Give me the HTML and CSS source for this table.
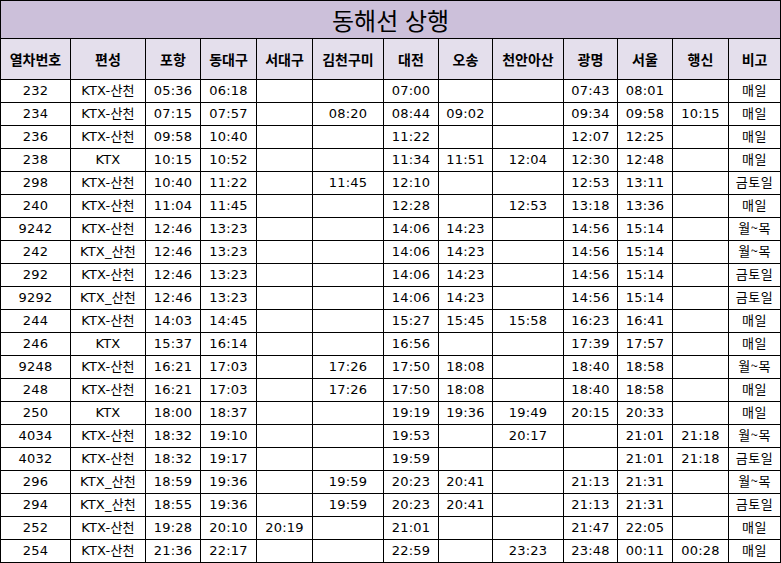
FILE: index.html
```html
<!DOCTYPE html>
<html lang="ko">
<head>
<meta charset="utf-8">
<link rel="stylesheet" href="styles.css">
</head>
<body>
<table class="tt">
<colgroup>
<col class="c70"><col class="c75"><col class="c55"><col class="c56"><col class="c56"><col class="c71"><col class="c55"><col class="c54"><col class="c71"><col class="c54"><col class="c55"><col class="c56"><col class="c52">
</colgroup>
<thead>
<tr class="title"><th colspan="13">동해선 상행</th></tr>
<tr class="head"><th>열차번호</th><th>편성</th><th>포항</th><th>동대구</th><th>서대구</th><th>김천구미</th><th>대전</th><th>오송</th><th>천안아산</th><th>광명</th><th>서울</th><th>행신</th><th>비고</th></tr>
</thead>
<tbody>
<tr><td>232</td><td>KTX-산천</td><td>05:36</td><td>06:18</td><td></td><td></td><td>07:00</td><td></td><td></td><td>07:43</td><td>08:01</td><td></td><td class="note">매일</td></tr>
<tr><td>234</td><td>KTX-산천</td><td>07:15</td><td>07:57</td><td></td><td>08:20</td><td>08:44</td><td>09:02</td><td></td><td>09:34</td><td>09:58</td><td>10:15</td><td class="note">매일</td></tr>
<tr><td>236</td><td>KTX-산천</td><td>09:58</td><td>10:40</td><td></td><td></td><td>11:22</td><td></td><td></td><td>12:07</td><td>12:25</td><td></td><td class="note">매일</td></tr>
<tr><td>238</td><td>KTX</td><td>10:15</td><td>10:52</td><td></td><td></td><td>11:34</td><td>11:51</td><td>12:04</td><td>12:30</td><td>12:48</td><td></td><td class="note">매일</td></tr>
<tr><td>298</td><td>KTX-산천</td><td>10:40</td><td>11:22</td><td></td><td>11:45</td><td>12:10</td><td></td><td></td><td>12:53</td><td>13:11</td><td></td><td class="note">금토일</td></tr>
<tr><td>240</td><td>KTX-산천</td><td>11:04</td><td>11:45</td><td></td><td></td><td>12:28</td><td></td><td>12:53</td><td>13:18</td><td>13:36</td><td></td><td class="note">매일</td></tr>
<tr><td>9242</td><td>KTX-산천</td><td>12:46</td><td>13:23</td><td></td><td></td><td>14:06</td><td>14:23</td><td></td><td>14:56</td><td>15:14</td><td></td><td class="note">월~목</td></tr>
<tr><td>242</td><td>KTX_산천</td><td>12:46</td><td>13:23</td><td></td><td></td><td>14:06</td><td>14:23</td><td></td><td>14:56</td><td>15:14</td><td></td><td class="note">월~목</td></tr>
<tr><td>292</td><td>KTX-산천</td><td>12:46</td><td>13:23</td><td></td><td></td><td>14:06</td><td>14:23</td><td></td><td>14:56</td><td>15:14</td><td></td><td class="note">금토일</td></tr>
<tr><td>9292</td><td>KTX_산천</td><td>12:46</td><td>13:23</td><td></td><td></td><td>14:06</td><td>14:23</td><td></td><td>14:56</td><td>15:14</td><td></td><td class="note">금토일</td></tr>
<tr><td>244</td><td>KTX-산천</td><td>14:03</td><td>14:45</td><td></td><td></td><td>15:27</td><td>15:45</td><td>15:58</td><td>16:23</td><td>16:41</td><td></td><td class="note">매일</td></tr>
<tr><td>246</td><td>KTX</td><td>15:37</td><td>16:14</td><td></td><td></td><td>16:56</td><td></td><td></td><td>17:39</td><td>17:57</td><td></td><td class="note">매일</td></tr>
<tr><td>9248</td><td>KTX-산천</td><td>16:21</td><td>17:03</td><td></td><td>17:26</td><td>17:50</td><td>18:08</td><td></td><td>18:40</td><td>18:58</td><td></td><td class="note">월~목</td></tr>
<tr><td>248</td><td>KTX-산천</td><td>16:21</td><td>17:03</td><td></td><td>17:26</td><td>17:50</td><td>18:08</td><td></td><td>18:40</td><td>18:58</td><td></td><td class="note">매일</td></tr>
<tr><td>250</td><td>KTX</td><td>18:00</td><td>18:37</td><td></td><td></td><td>19:19</td><td>19:36</td><td>19:49</td><td>20:15</td><td>20:33</td><td></td><td class="note">매일</td></tr>
<tr><td>4034</td><td>KTX-산천</td><td>18:32</td><td>19:10</td><td></td><td></td><td>19:53</td><td></td><td>20:17</td><td></td><td>21:01</td><td>21:18</td><td class="note">월~목</td></tr>
<tr><td>4032</td><td>KTX-산천</td><td>18:32</td><td>19:17</td><td></td><td></td><td>19:59</td><td></td><td></td><td></td><td>21:01</td><td>21:18</td><td class="note">금토일</td></tr>
<tr><td>296</td><td>KTX_산천</td><td>18:59</td><td>19:36</td><td></td><td>19:59</td><td>20:23</td><td>20:41</td><td></td><td>21:13</td><td>21:31</td><td></td><td class="note">월~목</td></tr>
<tr><td>294</td><td>KTX_산천</td><td>18:55</td><td>19:36</td><td></td><td>19:59</td><td>20:23</td><td>20:41</td><td></td><td>21:13</td><td>21:31</td><td></td><td class="note">금토일</td></tr>
<tr><td>252</td><td>KTX-산천</td><td>19:28</td><td>20:10</td><td>20:19</td><td></td><td>21:01</td><td></td><td></td><td>21:47</td><td>22:05</td><td></td><td class="note">매일</td></tr>
<tr><td>254</td><td>KTX-산천</td><td>21:36</td><td>22:17</td><td></td><td></td><td>22:59</td><td></td><td>23:23</td><td>23:48</td><td>00:11</td><td>00:28</td><td class="note">매일</td></tr>
</tbody>
</table>
</body>
</html>
```

FILE: styles.css
```css
html, body {
  margin: 0;
  padding: 0;
  background: #ffffff;
}
.tt {
  border-collapse: collapse;
  table-layout: fixed;
  width: 780px;
  font-family: "DejaVu Sans", "Noto Sans CJK KR", sans-serif;
  font-size: 13px;
  color: #000;
}
.c70 { width: 70px; }
.c75 { width: 75px; }
.c55 { width: 55px; }
.c56 { width: 56px; }
.c71 { width: 71px; }
.c54 { width: 54px; }
.c52 { width: 52px; }
.tt th, .tt td {
  border: 1px solid #000;
  padding: 0;
  text-align: center;
  vertical-align: middle;
  white-space: nowrap;
  overflow: hidden;
}
.tt td {
  height: 22px;
  line-height: 16px;
  letter-spacing: 0.2px;
}
.title th {
  height: 37px;
  background: #ccc0da;
  font-family: "Noto Sans CJK KR", sans-serif;
  font-weight: 400;
  font-size: 24px;
  line-height: 30px;
}
.head th {
  height: 40px;
  background: #e4dfec;
  font-family: "Noto Sans CJK KR", sans-serif;
  font-weight: 700;
  font-size: 14px;
  line-height: 18px;
}
.tt td.note {
  font-family: "Noto Sans CJK KR", sans-serif;
  font-size: 13px;
  line-height: 19px;
  vertical-align: top;
  letter-spacing: 0.5px;
}
```
